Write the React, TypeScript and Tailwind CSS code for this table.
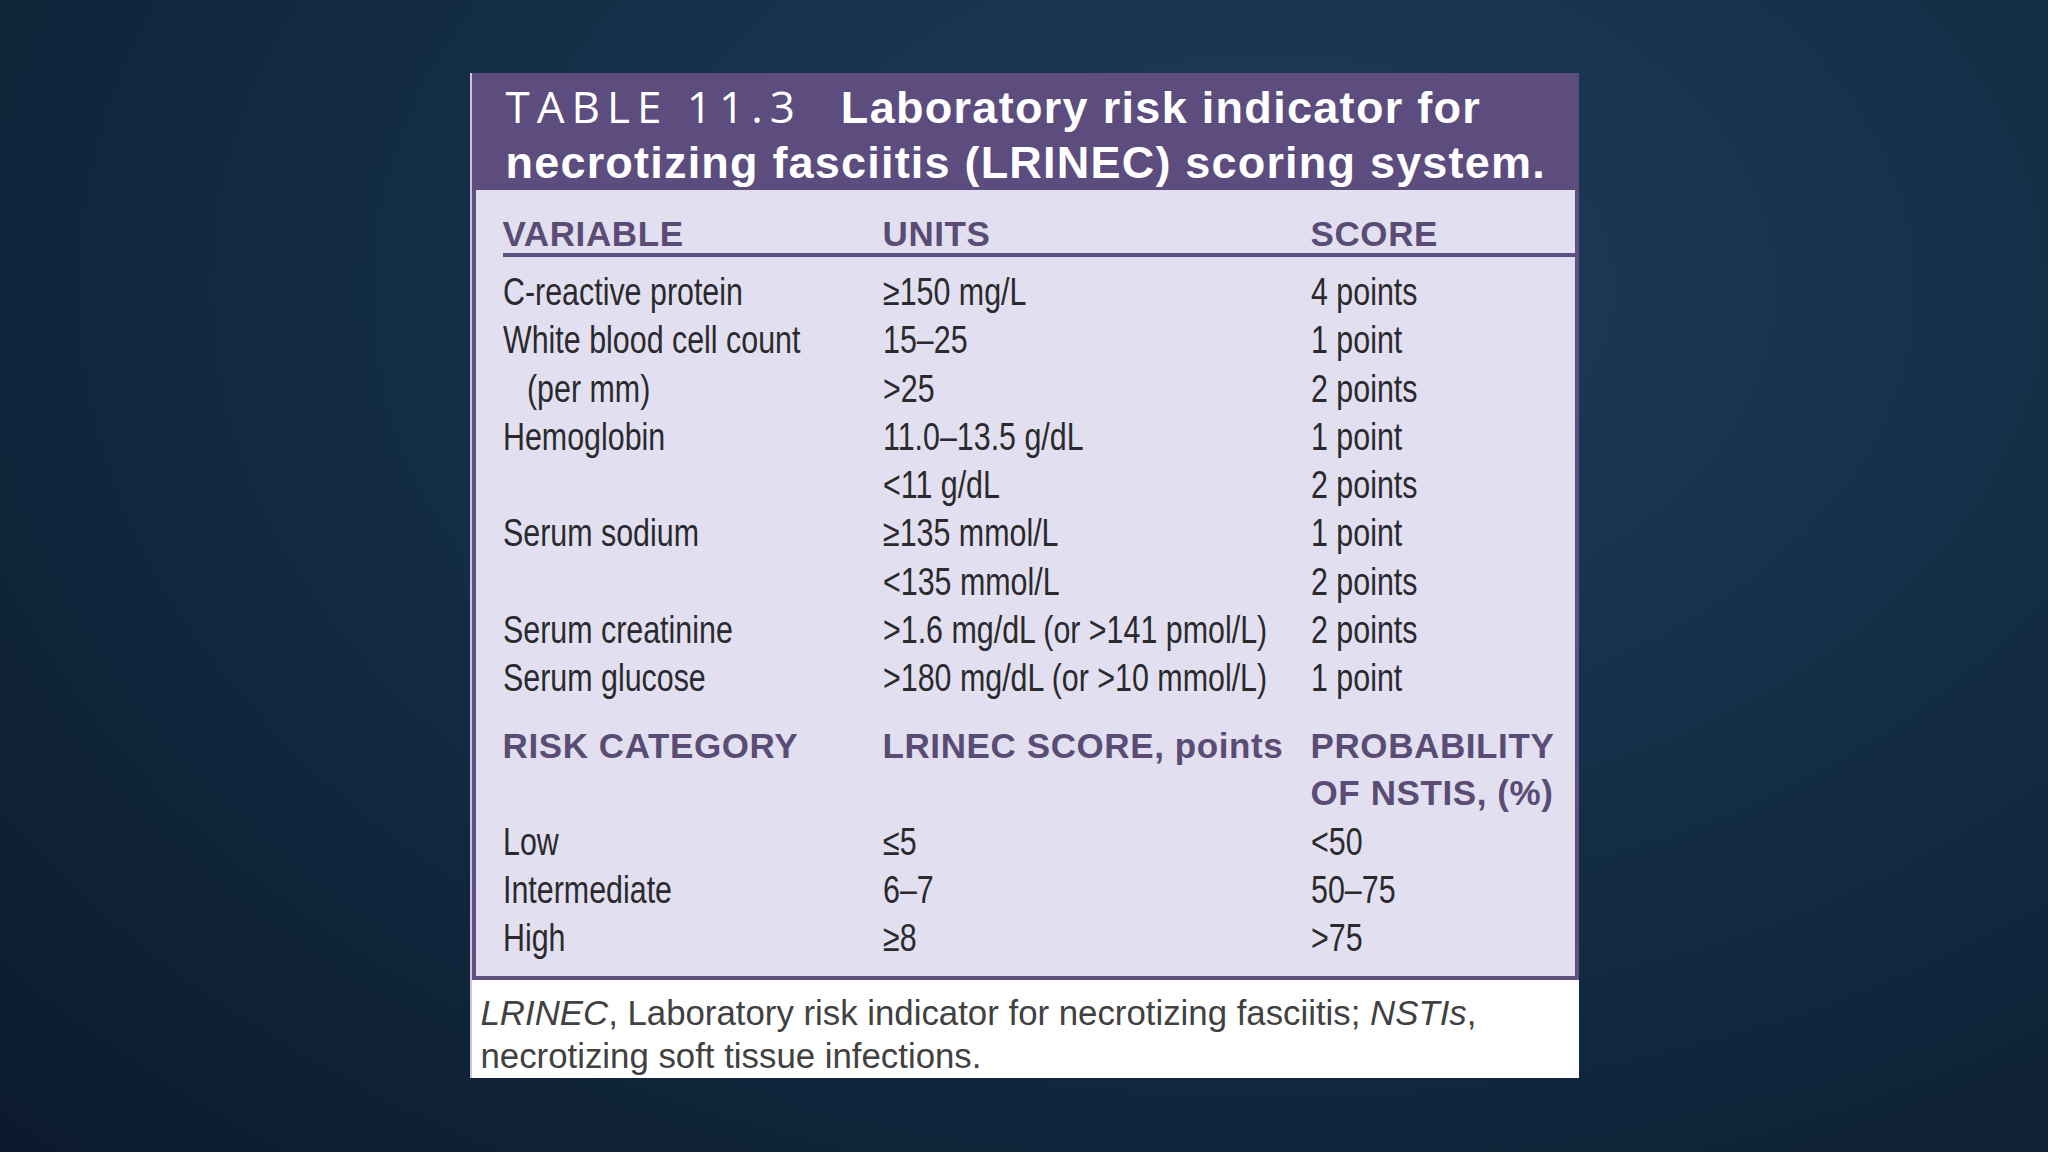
import React from 'react';

const rows: [string, string, string][] = [
  ['C-reactive protein', '≥150 mg/L', '4 points'],
  ['White blood cell count', '15–25', '1 point'],
  ['(per mm)', '>25', '2 points'],
  ['Hemoglobin', '11.0–13.5 g/dL', '1 point'],
  ['', '<11 g/dL', '2 points'],
  ['Serum sodium', '≥135 mmol/L', '1 point'],
  ['', '<135 mmol/L', '2 points'],
  ['Serum creatinine', '>1.6 mg/dL (or >141 pmol/L)', '2 points'],
  ['Serum glucose', '>180 mg/dL (or >10 mmol/L)', '1 point'],
];

const risks: [string, string, string][] = [
  ['Low', '≤5', '<50'],
  ['Intermediate', '6–7', '50–75'],
  ['High', '≥8', '>75'],
];

// shared cell styles
const head = "font-['Liberation_Sans',Arial,sans-serif] font-bold text-[35px] tracking-[0.6px] text-[#5a4c75]";
const cell = "font-['Liberation_Sans',Arial,sans-serif] text-[38px] leading-[48.3px] text-[#2a2a2e] whitespace-nowrap";

// the source table uses a condensed face; squeeze Arial to Arial Narrow widths
function Narrow({ text }: { text: string }) {
  return <span className="inline-block origin-left scale-x-[0.8]">{text}</span>;
}

export default function App() {
  return (
    <div className="w-full h-[1152px] flex justify-center pt-[73px] bg-[radial-gradient(ellipse_at_62%_25%,#1f3d5a_0%,#15304a_40%,#0b1a2c_100%)]">
      <div className="w-[1109px] h-[1005px] flex flex-col border-l-2 border-l-[#c9c3dc]">
        {/* title bar */}
        <div className="h-[117px] bg-[#5c4d7e] pl-[34px] pt-[11px] text-white leading-[45px] whitespace-nowrap">
          <span className="font-['Open_Sans',sans-serif] font-normal text-[44px] tracking-[7px] mr-[39px]">TABLE 11.3</span>
          <span className="font-['Liberation_Sans',Arial,sans-serif] font-bold text-[45px] tracking-[1.3px]">Laboratory risk indicator for</span>
          <br />
          <span className="font-['Liberation_Sans',Arial,sans-serif] font-bold text-[45px] tracking-[1.2px]">necrotizing fasciitis (LRINEC) scoring system.</span>
        </div>

        {/* table body */}
        <div className="flex-1 bg-[#e2e0f0] border-x-4 border-b-4 border-[#5e5080] flex flex-col">
          <div className="ml-[27px] mt-[25px] grid grid-cols-[380px_428px_1fr] border-b-4 border-[#5e5080] leading-[38px]">
            <div className={head}>VARIABLE</div>
            <div className={head}>UNITS</div>
            <div className={head}>SCORE</div>
          </div>

          <div className="ml-[27px] mt-[11px] grid grid-cols-[380px_428px_1fr]">
            {rows.map(([v, u, s], i) => (
              <React.Fragment key={i}>
                <div className={cell + (i === 2 ? ' pl-[24px]' : '')}>
                  <Narrow text={v} />
                </div>
                <div className={cell}>
                  <Narrow text={u} />
                </div>
                <div className={cell}>
                  <Narrow text={s} />
                </div>
              </React.Fragment>
            ))}
          </div>

          <div className="ml-[27px] mt-[19px] grid grid-cols-[380px_428px_1fr] leading-[47px]">
            <div className={head}>RISK CATEGORY</div>
            <div className={head + ' whitespace-nowrap'}>LRINEC SCORE, points</div>
            <div className={head}>
              PROBABILITY
              <br />
              OF NSTIS, (%)
            </div>
          </div>

          <div className="ml-[27px] mt-[2px] grid grid-cols-[380px_428px_1fr]">
            {risks.map(([r, sc, p], i) => (
              <React.Fragment key={i}>
                <div className={cell}>
                  <Narrow text={r} />
                </div>
                <div className={cell}>
                  <Narrow text={sc} />
                </div>
                <div className={cell}>
                  <Narrow text={p} />
                </div>
              </React.Fragment>
            ))}
          </div>
        </div>

        {/* footnote */}
        <div className="h-[98px] bg-white pl-[9px] pt-[11px] font-['Liberation_Sans',Arial,sans-serif] text-[34.8px] leading-[43px] text-[#414141] whitespace-nowrap">
          <i>LRINEC</i>, Laboratory risk indicator for necrotizing fasciitis; <i>NSTIs</i>,
          <br />
          necrotizing soft tissue infections.
        </div>
      </div>
    </div>
  );
}
